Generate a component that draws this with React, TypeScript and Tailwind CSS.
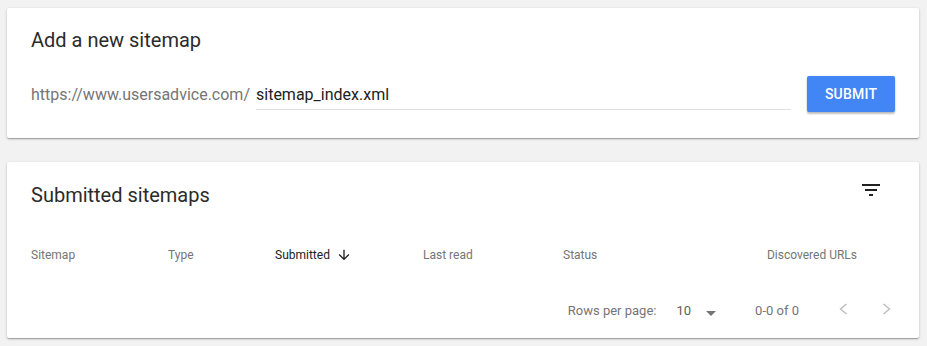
import React from "react";

function FilterIcon() {
  return (
    <svg width="24" height="24" viewBox="0 0 24 24" fill="#212121">
      <path d="M10 18h4v-2h-4v2zM3 6v2h18V6H3zm3 7h12v-2H6v2z" />
    </svg>
  );
}

function ArrowDown() {
  return (
    <svg width="16" height="16" viewBox="0 0 24 24" fill="#212121">
      <path d="M20 12l-1.41-1.41L13 16.17V4h-2v12.17l-5.58-5.59L4 12l8 8 8-8z" />
    </svg>
  );
}

function DropDown() {
  return (
    <svg width="24" height="24" viewBox="0 0 24 24" fill="#757575">
      <path d="M7 10l5 5 5-5z" />
    </svg>
  );
}

function ChevronLeft() {
  return (
    <svg width="10" height="12" viewBox="0 0 10 12" fill="none" stroke="#bdbdbd" strokeWidth="1.4">
      <polyline points="8.5,1 2.5,6 8.5,11" />
    </svg>
  );
}

function ChevronRight() {
  return (
    <svg width="10" height="12" viewBox="0 0 10 12" fill="none" stroke="#bdbdbd" strokeWidth="1.4">
      <polyline points="1.5,1 7.5,6 1.5,11" />
    </svg>
  );
}

const cardCls =
  "w-[912px] bg-white rounded-[2px] shadow-[0_1px_3px_rgba(0,0,0,0.2),0_1px_1px_rgba(0,0,0,0.14),0_2px_1px_-1px_rgba(0,0,0,0.12)]";

export default function App() {
  return (
    <div
      className="w-[927px] h-[346px] bg-[#f2f2f2] pt-[8px] pl-[7px] overflow-hidden"
      style={{ fontFamily: "Roboto, 'Liberation Sans', sans-serif" }}
    >
      {/* Card 1 */}
      <div className={`${cardCls} px-[24px] pt-[18px] pb-[26px]`}>
        <div className="text-[20px] leading-[28px] text-[#2b2b2b]">Add a new sitemap</div>
        <div className="mt-[22px] flex items-start h-[36px]">
          <span className="mt-[7px] text-[16px] leading-6 text-[#757575] whitespace-nowrap">
            https://www.usersadvice.com/
          </span>
          <div className="ml-[6px] mt-[7px] flex-1 text-[16px] leading-6 text-[#212121] pb-[2px] border-b border-[#e0e0e0]">
            sitemap_index.xml
          </div>
          <button className="ml-[16px] w-[88px] h-[36px] rounded-[2px] bg-[#4285f4] text-white text-[14px] font-medium tracking-[0.2px] uppercase shadow-[0_2px_2px_rgba(0,0,0,0.24),0_0_2px_rgba(0,0,0,0.12)]">
            Submit
          </button>
        </div>
      </div>

      {/* Card 2 */}
      <div className={`${cardCls} mt-[24px] px-[24px]`}>
        <div className="flex items-start justify-between h-[52px]">
          <div className="mt-[19px] text-[20px] leading-[28px] text-[#2b2b2b]">Submitted sitemaps</div>
          <div className="mt-[4px] w-12 h-12 flex items-center justify-center">
            <FilterIcon />
          </div>
        </div>
        <div className="mt-[33px] grid grid-cols-[137px_107px_148px_140px_1fr] text-[12px] leading-4 text-[#757575] pr-[38px]">
          <div>Sitemap</div>
          <div>Type</div>
          <div className="flex items-center text-[#212121]">
            <span>Submitted</span>
            <span className="ml-[6px]">
              <ArrowDown />
            </span>
          </div>
          <div>Last read</div>
          <div className="flex">
            <span>Status</span>
            <span className="ml-auto">Discovered URLs</span>
          </div>
        </div>
        <div className="mt-[37px] h-[38px] flex items-start justify-end pr-[3px] text-[13px] leading-4 text-[#757575]">
          <span className="pt-[3px]">Rows per page:</span>
          <span className="pt-[3px] ml-[20px] text-[#616161]">10</span>
          <span className="mt-[1px] ml-[8px]">
            <DropDown />
          </span>
          <span className="pt-[3px] ml-[32px]">0-0 of 0</span>
          <span className="mt-[3px] ml-[39px]">
            <ChevronLeft />
          </span>
          <span className="mt-[3px] ml-[34px]">
            <ChevronRight />
          </span>
        </div>
      </div>
    </div>
  );
}
